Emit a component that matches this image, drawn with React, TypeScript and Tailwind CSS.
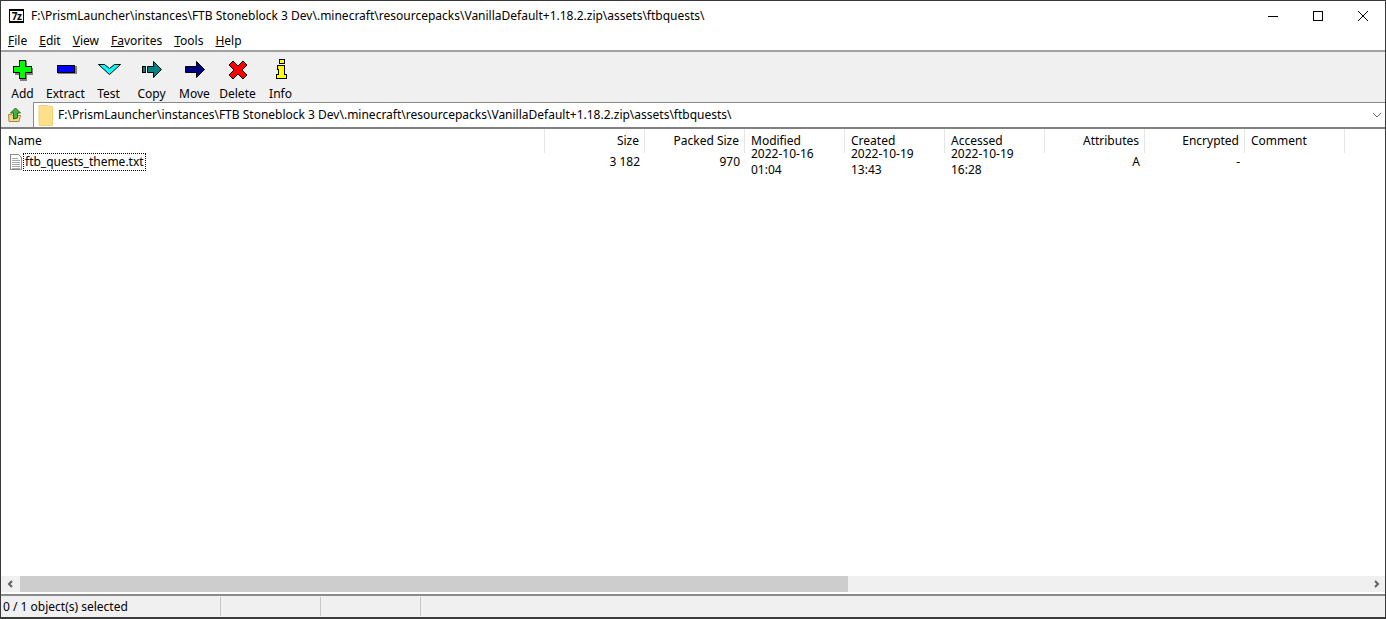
import React from "react";

const font = { fontFamily: '"Noto Sans", "Liberation Sans", sans-serif' };

// toolbar glyphs, drawn on a 24px grid like the 7-Zip bitmaps
const PlusIcon = () => (
  <svg width="24" height="24" viewBox="0 0 24 24" shapeRendering="crispEdges">
    <path d="M9 4h7v7h6v7h-6v6H9v-6H4v-7h5z" fill="#808080" />
    <path d="M8.5 3.5h6v6h6v6h-6v6h-6v-6h-6v-6h6z" fill="#00ff00" stroke="#000" />
  </svg>
);

const MinusIcon = () => (
  <svg width="24" height="24" viewBox="0 0 24 24" shapeRendering="crispEdges">
    <rect x="4" y="9" width="19" height="8" fill="#808080" />
    <rect x="3.5" y="8.5" width="17" height="7" fill="#0000ff" stroke="#000" />
  </svg>
);

const TestIcon = () => (
  <svg width="24" height="24" viewBox="0 0 24 24">
    <path d="M1.5 7.5h6l5 4 5-4h6l-11 10z" fill="#00ffff" stroke="#000" strokeLinejoin="miter" />
  </svg>
);

const ArrowIcon = ({ fill, tail }: { fill: string; tail?: boolean }) => (
  <svg width="24" height="24" viewBox="0 0 24 24" shapeRendering="crispEdges">
    {tail ? (
      <>
        <rect x="2.5" y="9.5" width="3" height="6" fill={fill} stroke="#000" />
        <path d="M7.5 9.5h6v-5l8 8-8 8v-5h-6z" fill={fill} stroke="#000" shapeRendering="auto" />
      </>
    ) : (
      <path d="M2.5 9.5h11v-5l8 8-8 8v-5h-11z" fill={fill} stroke="#000" shapeRendering="auto" />
    )}
  </svg>
);

const DeleteIcon = () => (
  <svg width="24" height="24" viewBox="0 0 24 24">
    <path d="M7 4l5 5 5-5 4 4-5 5 5 5-4 4-5-5-5 5-4-4 5-5-5-5z" fill="#ff0000" stroke="#000" />
  </svg>
);

const InfoIcon = () => (
  <svg width="24" height="24" viewBox="0 0 24 24" shapeRendering="crispEdges">
    <rect x="10" y="2.5" width="5" height="4" fill="#ffff00" stroke="#000" />
    <path d="M8.5 8.5h7v9h2v4h-10v-4h2v-5h-1z" fill="#ffff00" stroke="#000" />
  </svg>
);

const AppLogo = () => (
  <div className="w-[15px] h-[14px] bg-black flex items-center justify-center text-white text-[10px] font-bold leading-none">
    <span className="bg-white text-black px-[1px] h-[10px] w-[13px] flex items-center justify-center text-[10px] tracking-[-0.5px]">7z</span>
  </div>
);

const UpIcon = () => (
  <svg width="16" height="16" viewBox="0 0 16 16">
    <path d="M1.5 7.5h3l1 1h8l-1.5 6h-10z" fill="#f3d98b" stroke="#a8873a" />
    <path d="M6.5 12v-6h-3l5-5 5 5h-3v5z" fill="#4caf3a" stroke="#1f6b1a" />
  </svg>
);

const FolderIcon = () => (
  <svg width="16" height="22" viewBox="0 0 16 22">
    <path d="M1 1.5h9l1 1h3.5v19H1z" fill="#ffe08a" stroke="#f2cf7a" />
  </svg>
);

const FileIcon = () => (
  <svg width="16" height="16" viewBox="0 0 16 16" shapeRendering="crispEdges">
    <path d="M2.5 .5h8l3 3v12h-11z" fill="#fff" stroke="#8c8c8c" />
    <path d="M4 4h6M4 6h8M4 8h8M4 10h8M4 12h8M4 14h8" stroke="#a8a8a8" />
  </svg>
);

const tools = [
  { label: "Add", icon: <PlusIcon /> },
  { label: "Extract", icon: <MinusIcon /> },
  { label: "Test", icon: <TestIcon /> },
  { label: "Copy", icon: <ArrowIcon fill="#008080" tail /> },
  { label: "Move", icon: <ArrowIcon fill="#000080" /> },
  { label: "Delete", icon: <DeleteIcon /> },
  { label: "Info", icon: <InfoIcon /> },
];

const menus = [
  ["F", "ile"],
  ["E", "dit"],
  ["V", "iew"],
  ["Fa", "vorites"],
  ["T", "ools"],
  ["H", "elp"],
];

const columns = [
  { name: "Size", value: "3 182", right: true },
  { name: "Packed Size", value: "970", right: true },
  { name: "Modified", value: "2022-10-16 01:04" },
  { name: "Created", value: "2022-10-19 13:43" },
  { name: "Accessed", value: "2022-10-19 16:28" },
  { name: "Attributes", value: "A", right: true },
  { name: "Encrypted", value: "-", right: true },
  { name: "Comment", value: "" },
];

const path =
  "F:\\PrismLauncher\\instances\\FTB Stoneblock 3 Dev\\.minecraft\\resourcepacks\\VanillaDefault+1.18.2.zip\\assets\\ftbquests\\";

export default function App() {
  return (
    <div
      className="w-[1386px] h-[619px] flex flex-col bg-white text-[12px] leading-[16px] text-black border-l border-r border-t border-b-2 border-[#3a3a3a] overflow-hidden"
      style={font}
    >
      {/* Title bar */}
      <div className="h-[30px] flex items-center shrink-0">
        <div className="ml-[8px] mr-[7px]">
          <AppLogo />
        </div>
        <span className="flex-1">{path}</span>
        <div className="flex items-center">
          <div className="w-[45px] h-[30px] flex items-center justify-center">
            <div className="w-[10px] h-px bg-black" />
          </div>
          <div className="w-[45px] h-[30px] flex items-center justify-center">
            <div className="w-[10px] h-[10px] border border-black" />
          </div>
          <div className="w-[45px] h-[30px] flex items-center justify-center">
            <svg width="10" height="10" viewBox="0 0 10 10">
              <path d="M0 0l10 10M10 0L0 10" stroke="#000" strokeWidth="1" />
            </svg>
          </div>
        </div>
      </div>

      {/* Menu */}
      <div className="h-[19px] flex items-center shrink-0 pl-[1px]">
        {menus.map(([key, rest]) => (
          <span key={rest} className="px-[6px]">
            <span className="underline">{key}</span>
            {rest}
          </span>
        ))}
      </div>

      {/* Toolbar */}
      <div className="h-[52px] shrink-0 flex pl-[0px] pt-[5px] bg-[#f0f0f0] border-t-2 border-[#a0a0a0]">
        {tools.map((t) => (
          <div key={t.label} className="w-[43px] flex flex-col items-center">
            {t.icon}
            <span className="mt-[5px]">{t.label}</span>
          </div>
        ))}
      </div>

      {/* Address row */}
      <div className="h-[25px] shrink-0 flex bg-[#f0f0f0]">
        <div className="w-[32px] flex items-center justify-center pr-[4px]">
          <UpIcon />
        </div>
        <div className="flex-1 flex items-center bg-white border-t border-l border-[#8a8a8a] pl-[4px]">
          <FolderIcon />
          <span className="ml-[4px] flex-1">{path}</span>
          <svg width="10" height="6" viewBox="0 0 10 6" className="mr-[3px]">
            <path d="M1 1l4 4 4-4" fill="none" stroke="#606060" />
          </svg>
        </div>
      </div>

      {/* File list */}
      <div className="flex-1 flex flex-col border-t-2 border-[#808080] min-h-0">
        <div className="h-[24px] shrink-0 flex items-center">
          <div className="w-[544px] h-full flex items-center pl-[7px] border-r border-[#e5e5e5]">Name</div>
          {columns.map((c) => (
            <div
              key={c.name}
              className={`w-[100px] h-full flex items-center px-[5px] border-r border-[#e5e5e5] ${c.right ? "justify-end" : "pl-[6px]"}`}
            >
              {c.name}
            </div>
          ))}
        </div>
        <div className="h-[18px] shrink-0 flex items-center">
          <div className="w-[544px] flex items-center pl-[7px]">
            <FileIcon />
            <span className="border border-dotted border-black px-[1px] ml-[-1px] h-[18px]">ftb_quests_theme.txt</span>
          </div>
          {columns.map((c) => (
            <div
              key={c.name}
              className={`w-[100px] flex items-center px-[5px] ${c.right ? "justify-end" : "pl-[6px]"}`}
            >
              {c.value}
            </div>
          ))}
        </div>
        <div className="flex-1" />

        {/* Horizontal scrollbar */}
        <div className="h-[16px] shrink-0 mb-[2px] flex bg-[#f0f0f0] items-stretch">
          <div className="w-[19px] flex items-center justify-center">
            <svg width="7" height="8" viewBox="0 0 7 8">
              <path d="M5 1L2 4l3 3" fill="none" stroke="#606060" strokeWidth="2" />
            </svg>
          </div>
          <div className="w-[828px] bg-[#cdcdcd]" />
          <div className="flex-1" />
          <div className="w-[17px] flex items-center justify-center">
            <svg width="7" height="8" viewBox="0 0 7 8">
              <path d="M2 1l3 3-3 3" fill="none" stroke="#606060" strokeWidth="2" />
            </svg>
          </div>
        </div>
      </div>

      {/* Status bar */}
      <div className="h-[23px] shrink-0 flex bg-[#f0f0f0] border-t-2 border-[#8a8a8a]">
        <div className="w-[220px] flex items-center pl-[2px] border-r border-[#c8c8c8] my-[1px]">0 / 1 object(s) selected</div>
        <div className="w-[100px] border-r border-[#c8c8c8] my-[1px]" />
        <div className="w-[100px] border-r border-[#c8c8c8] my-[1px]" />
      </div>
    </div>
  );
}
